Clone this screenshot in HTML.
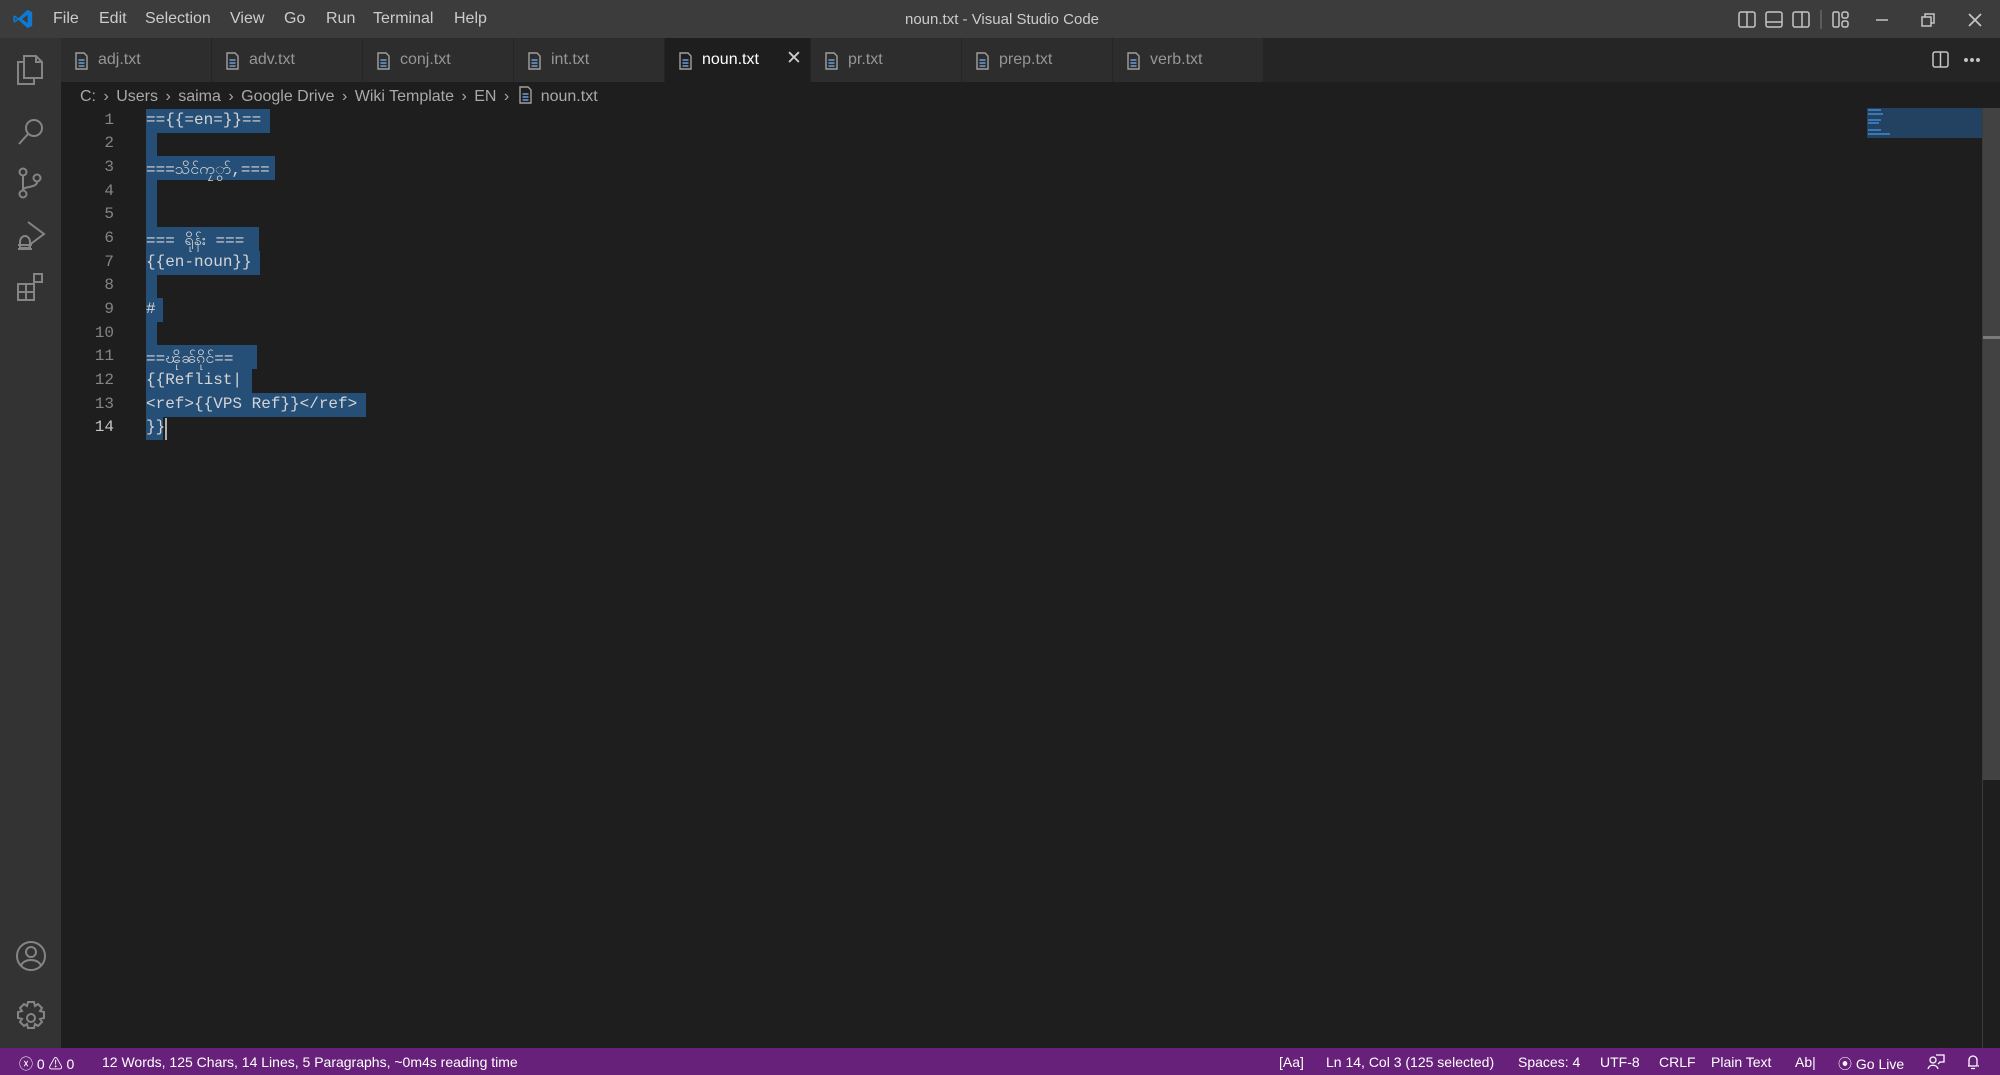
<!DOCTYPE html>
<html><head><meta charset="utf-8">
<style>
*{margin:0;padding:0;box-sizing:border-box}
body{width:2000px;height:1075px;background:#1e1e1e;overflow:hidden;position:relative;font-family:"Liberation Sans","Noto Sans CJK SC",sans-serif;}
.abs{position:absolute}
#title{left:0;top:0;width:2000px;height:38px;background:#3c3c3c;}
.menu{position:absolute;top:10px;font-size:16px;color:#cccccc}
#act{left:0;top:38px;width:61px;height:1010px;background:#333333}
#tabs{left:61px;top:38px;width:1939px;height:44px;background:#252526}
.tab{position:absolute;top:0;height:44px;width:151px;background:#2d2d2d;border-right:1px solid #252526;color:#969696;font-size:16px}
.tab span{position:absolute;left:37px;top:13px}
.tab svg{position:absolute;left:14px;top:14px}
.tab.active{background:#1e1e1e;color:#ffffff}
#bc{left:80px;top:86px;font-size:16px;color:#a9a9a9;white-space:nowrap}
#bc b{font-weight:normal;margin:0 3px}
.ln{position:absolute;width:52px;text-align:right;left:62px;font-family:"Liberation Mono",monospace;font-size:16px;color:#858585}
.sel{position:absolute;left:146px;height:24px;background:#264f78}
.code{position:absolute;left:146px;font-family:"Liberation Mono","Noto Sans CJK SC",monospace;font-size:16px;color:#d4d4d4;white-space:pre}
#status{left:0;top:1048px;width:2000px;height:27px;background:#68217a;color:#fff;font-size:14px}
#status span{position:absolute;top:6px;white-space:nowrap}
</style></head><body>
<div id="title" class="abs">
<svg class="abs" style="left:12px;top:8px" width="22" height="22" viewBox="0 0 24 24"><path d="M17 2 L22 4.5 V19.5 L17 22 L7 13 L3 16 L1.5 15 V9 L3 8 L7 11 L17 2 Z M17 7.5 L11 12 L17 16.5 Z M3.5 10 V14 L5.5 12 Z" fill="#0e7ad3" fill-rule="evenodd"/></svg>
<div class="menu" style="left:53px">File</div>
<div class="menu" style="left:99px">Edit</div>
<div class="menu" style="left:145px">Selection</div>
<div class="menu" style="left:230px">View</div>
<div class="menu" style="left:284px">Go</div>
<div class="menu" style="left:326px">Run</div>
<div class="menu" style="left:373px">Terminal</div>
<div class="menu" style="left:454px">Help</div>
<div class="menu" style="left:905px;font-size:15px;top:11px;color:#cccccc">noun.txt - Visual Studio Code</div>
<svg class="abs" style="left:1736px;top:9px" width="260" height="22" viewBox="0 0 260 22" fill="none" stroke="#c5c5c5" stroke-width="1.5">
<rect x="3" y="3" width="16" height="15" rx="2"/><line x1="11" y1="3" x2="11" y2="18"/>
<rect x="30" y="3" width="16" height="15" rx="2"/><line x1="30" y1="13" x2="46" y2="13"/>
<rect x="57" y="3" width="16" height="15" rx="2"/><line x1="66" y1="3" x2="66" y2="18"/>
<line x1="85" y1="1" x2="85" y2="20" stroke="#666"/>
<rect x="97" y="3" width="6" height="15" rx="1.5"/><rect x="106" y="3" width="6" height="6" rx="2"/><rect x="106" y="12" width="6" height="6" rx="2"/>
<line x1="140" y1="11" x2="152" y2="11"/>
<rect x="186" y="8" width="9" height="9"/><path d="M189 8 V5 H198 V14 H195"/>
<path d="M233 5 L245 17 M245 5 L233 17" stroke-width="1.7"/>
</svg>
</div>
<div id="act" class="abs">
<svg class="abs" style="left:14px;top:10px" width="34" height="300" viewBox="0 0 34 300" fill="none" stroke="#858585" stroke-width="2">
<path d="M10 8 H22 L28 14 V30 H10 Z M22 8 V14 H28 M10 14 H4 V36 H20 V30"/>
<circle cx="20" cy="80" r="8"/><line x1="14" y1="86" x2="5" y2="96"/>
<circle cx="9" cy="124" r="3.5"/><circle cx="9" cy="146" r="3.5"/><circle cx="23" cy="130" r="3.5"/><path d="M9 128 V142 M23 134 C23 140 9 138 9 142"/>
<path d="M14 174 L30 186 L14 198"/><path d="M6 194 a5 6 0 0 1 10 0 v6 h-10 z M4 197 h14 M4 201 h14"/>
<rect x="4" y="236" width="8" height="8"/><rect x="12" y="236" width="8" height="8"/><rect x="4" y="244" width="8" height="8"/><rect x="12" y="244" width="8" height="8"/><rect x="20" y="226" width="8" height="8"/>
</svg>
<svg class="abs" style="left:13px;top:900px" width="36" height="100" viewBox="0 0 36 100" fill="none" stroke="#858585" stroke-width="2">
<circle cx="18" cy="18" r="14"/><circle cx="18" cy="14" r="5"/><path d="M8 28 C10 20 26 20 28 28"/>
<circle cx="18" cy="80" r="4"/><path d="M15 64 h6 l1 4 3 -2 4 4 -2 3 4 1 v6 l-4 1 2 3 -4 4 -3 -2 -1 4 h-6 l-1 -4 -3 2 -4 -4 2 -3 -4 -1 v-6 l4 -1 -2 -3 4 -4 3 2 z"/>
</svg>
</div>
<div id="tabs" class="abs">
<svg width="0" height="0" style="position:absolute"><defs><g id="fi"><path d="M1 1 H9 L12 4 V17 H1 Z" fill="none" stroke="#a0a0a0" stroke-width="1.4"/><path d="M3.5 8 H9.5 M3.5 11 H9.5 M3.5 14 H9.5" stroke="#6c9fd6" stroke-width="1.4"/></g></defs></svg>
<div class="tab" style="left:0"><svg width="14" height="18"><use href="#fi"/></svg><span>adj.txt</span></div>
<div class="tab" style="left:151px"><svg width="14" height="18"><use href="#fi"/></svg><span>adv.txt</span></div>
<div class="tab" style="left:302px"><svg width="14" height="18"><use href="#fi"/></svg><span>conj.txt</span></div>
<div class="tab" style="left:453px"><svg width="14" height="18"><use href="#fi"/></svg><span>int.txt</span></div>
<div class="tab active" style="left:604px;width:146px"><svg width="14" height="18"><use href="#fi"/></svg><span>noun.txt</span><div style="position:absolute;left:121px;top:9px;font-size:19px;color:#ccc">✕</div></div>
<div class="tab" style="left:750px"><svg width="14" height="18"><use href="#fi"/></svg><span>pr.txt</span></div>
<div class="tab" style="left:901px"><svg width="14" height="18"><use href="#fi"/></svg><span>prep.txt</span></div>
<div class="tab" style="left:1052px"><svg width="14" height="18"><use href="#fi"/></svg><span>verb.txt</span></div>
<svg class="abs" style="left:1870px;top:12px" width="60" height="20" viewBox="0 0 60 20" fill="none" stroke="#c5c5c5" stroke-width="1.5"><rect x="2" y="2" width="15" height="15" rx="2"/><line x1="9.5" y1="2" x2="9.5" y2="17"/><circle cx="35" cy="10" r="1.2" fill="#c5c5c5"/><circle cx="41" cy="10" r="1.2" fill="#c5c5c5"/><circle cx="47" cy="10" r="1.2" fill="#c5c5c5"/></svg>
</div>
<div id="bc" class="abs">C: <b>›</b> Users <b>›</b> saima <b>›</b> Google Drive <b>›</b> Wiki Template <b>›</b> EN <b>›</b> <svg width="14" height="18" style="vertical-align:-3px;margin:0 8px 0 2px"><use href="#fi"/></svg>noun.txt</div>

<div class="sel" style="top:109px;width:124px"></div>
<div class="sel" style="top:132px;width:11px"></div>
<div class="sel" style="top:156px;width:129px"></div>
<div class="sel" style="top:180px;width:11px"></div>
<div class="sel" style="top:203px;width:11px"></div>
<div class="sel" style="top:227px;width:113px"></div>
<div class="sel" style="top:251px;width:114px"></div>
<div class="sel" style="top:274px;width:11px"></div>
<div class="sel" style="top:298px;width:17px"></div>
<div class="sel" style="top:322px;width:11px"></div>
<div class="sel" style="top:345px;width:111px"></div>
<div class="sel" style="top:369px;width:106px"></div>
<div class="sel" style="top:393px;width:220px"></div>
<div class="sel" style="top:416px;width:17px"></div>

<div class="ln" style="top:111px">1</div>
<div class="ln" style="top:134px">2</div>
<div class="ln" style="top:158px">3</div>
<div class="ln" style="top:182px">4</div>
<div class="ln" style="top:205px">5</div>
<div class="ln" style="top:229px">6</div>
<div class="ln" style="top:253px">7</div>
<div class="ln" style="top:276px">8</div>
<div class="ln" style="top:300px">9</div>
<div class="ln" style="top:324px">10</div>
<div class="ln" style="top:347px">11</div>
<div class="ln" style="top:371px">12</div>
<div class="ln" style="top:395px">13</div>
<div class="ln" style="top:418px;color:#c6c6c6">14</div>

<div class="code" style="top:111px">=={{=en=}}==</div>
<div class="code" style="top:158px">===သိင်ကၠွာ်,===</div>
<div class="code" style="top:229px">=== ရိုန်း ===</div>
<div class="code" style="top:253px">{{en-noun}}</div>
<div class="code" style="top:300px">#</div>
<div class="code" style="top:347px">==ၽိုၼ်ၵိုင်==</div>
<div class="code" style="top:371px">{{Reflist|</div>
<div class="code" style="top:395px">&lt;ref&gt;{{VPS Ref}}&lt;/ref&gt;</div>
<div class="code" style="top:418px">}}</div>
<div class="abs" style="left:165px;top:418px;width:2px;height:22px;background:#aeafad"></div>

<div class="abs" style="left:1867px;top:108px;width:116px;height:30px;background:#264f78;opacity:.75"></div>
<div class="abs" style="left:1868px;top:109px;width:13px;height:2px;background:#3a78b5"></div>
<div class="abs" style="left:1868px;top:113px;width:15px;height:2px;background:#3a78b5"></div>
<div class="abs" style="left:1868px;top:119px;width:13px;height:2px;background:#3a78b5"></div>
<div class="abs" style="left:1868px;top:122px;width:11px;height:2px;background:#3a78b5"></div>
<div class="abs" style="left:1868px;top:129px;width:13px;height:2px;background:#3a78b5"></div>
<div class="abs" style="left:1868px;top:133px;width:22px;height:2px;background:#3a78b5"></div>
<div class="abs" style="left:1982px;top:108px;width:1px;height:940px;background:#3a3a3a"></div>
<div class="abs" style="left:1983px;top:108px;width:17px;height:672px;background:#424242"></div>
<div class="abs" style="left:1983px;top:336px;width:17px;height:3px;background:#7a7a7a"></div>

<div id="status" class="abs">
<span style="left:19px">ⓧ 0 ⚠ 0</span>
<span style="left:102px">12 Words, 125 Chars, 14 Lines, 5 Paragraphs, ~0m4s reading time</span>
<span style="left:1279px">[Aa]</span>
<span style="left:1326px">Ln 14, Col 3 (125 selected)</span>
<span style="left:1518px">Spaces: 4</span>
<span style="left:1600px">UTF-8</span>
<span style="left:1659px">CRLF</span>
<span style="left:1711px">Plain Text</span>
<span style="left:1795px">Ab|</span>
<span style="left:1838px">⦿ Go Live</span>
<svg class="abs" style="left:1927px;top:5px" width="18" height="18" viewBox="0 0 18 18" fill="none" stroke="#fff" stroke-width="1.3"><circle cx="6" cy="7" r="3"/><path d="M1 16 C2 11 10 11 11 16 M9 2 H17 V9 H13 L11 11"/></svg>
<svg class="abs" style="left:1965px;top:5px" width="16" height="18" viewBox="0 0 16 18" fill="none" stroke="#fff" stroke-width="1.3"><path d="M4 13 V7 a4 4 0 0 1 8 0 V13 H3 M13 13 H14 M6 15.5 H10"/></svg>
</div>
</body></html>
